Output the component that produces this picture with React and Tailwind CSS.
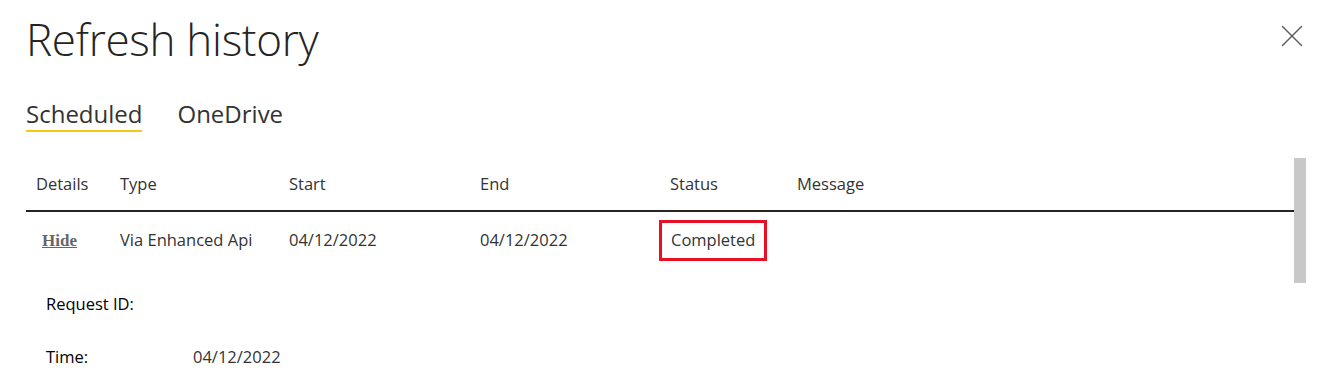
import { X } from 'lucide-react'

const font = { fontFamily: '"Open Sans", "Noto Sans", sans-serif' }

export default function App() {
  return (
    <div className="relative w-[1324px] h-[387px] bg-white overflow-hidden text-[#333]" style={font}>
      <div className="pl-[26px] pt-[10px]">
        <h1 className="text-[44px] leading-[58px] font-light text-[#252423] tracking-[-0.3px]">Refresh history</h1>
      </div>

      <button className="absolute left-[1273px] top-[17px] text-[#605e5c]">
        <X className="w-[38px] h-[38px]" strokeWidth={0.9} />
      </button>

      {/* tabs */}
      <div className="flex gap-[35px] pl-[26px] mt-[31px]">
        <div className="text-[24px] leading-[30px] text-[#333] border-b-2 border-[#f2c811] pb-[1px]">Scheduled</div>
        <div className="text-[24px] leading-[30px] text-[#333]">OneDrive</div>
      </div>

      {/* table */}
      <div className="flex mt-[26px]">
        <div className="w-[1268px] ml-[26px]">
          <div className="grid grid-cols-[84px_169px_191px_190px_127px_1fr] pl-[10px] h-[54px] items-center text-[16.5px] text-[#333] border-b-2 border-[#252423]">
            <div>Details</div>
            <div>Type</div>
            <div>Start</div>
            <div>End</div>
            <div>Status</div>
            <div>Message</div>
          </div>
          <div className="grid grid-cols-[84px_169px_191px_190px_127px_1fr] pl-[10px] h-[57px] items-center text-[16.5px] text-[#333]">
            <div className="pl-[6px]">
              <a className="text-[17px] font-bold underline text-[#666]" style={{ fontFamily: '"Liberation Serif", serif' }}>Hide</a>
            </div>
            <div>Via Enhanced Api</div>
            <div>04/12/2022</div>
            <div>04/12/2022</div>
            <div>
              <span className="inline-flex items-center h-[41px] -ml-[11px] px-[9px] border-[3px] border-[#e81123]">Completed</span>
            </div>
            <div></div>
          </div>
          <div className="pl-[20px] text-[16.5px] text-black">
            <div className="h-[43px] flex items-center mt-[14px]">Request ID:</div>
            <div className="h-[43px] flex items-center mt-[10px]">
              <span className="w-[147px]">Time:</span>
              <span className="text-[#333]">04/12/2022</span>
            </div>
          </div>
        </div>
        <div className="w-[12px] h-[125px] bg-[#c8c8c8]"></div>
      </div>
    </div>
  )
}
